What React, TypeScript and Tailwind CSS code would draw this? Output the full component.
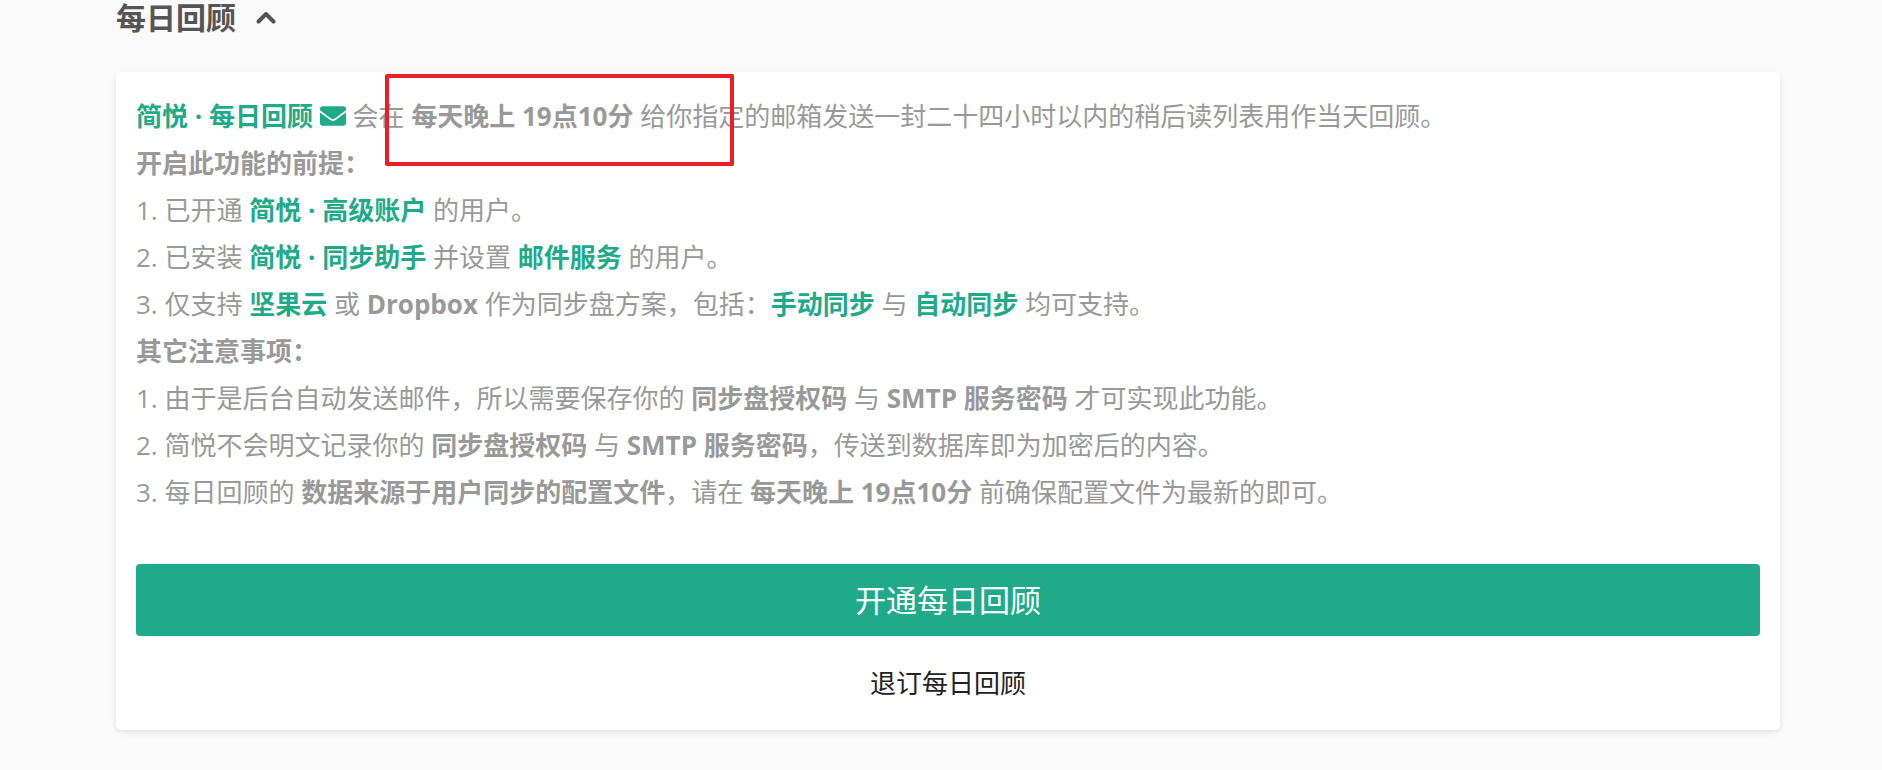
import { FaEnvelope } from 'react-icons/fa';

const fontStack = '"Open Sans", "Noto Sans CJK SC", sans-serif';

const G = ({ children }: { children: React.ReactNode }) => (
    <b className="font-bold text-[#1fab89]">{children}</b>
);

const B = ({ children }: { children: React.ReactNode }) => (
    <b className="font-bold">{children}</b>
);

const App = () => {
    return (
        <div className="relative min-h-[770px] bg-[#fafafa] pl-[116px] pr-[102px]" style={{ fontFamily: fontStack }}>
            <div className="flex h-[72px] items-start text-[30px] leading-[36px] font-bold text-[#555]">
                <span>每日回顾</span>
                <svg viewBox="0 0 20 14" className="ml-[20px] mt-[10px] h-[15px] w-[20px]" fill="none" stroke="currentColor" strokeWidth="4" strokeLinecap="round" strokeLinejoin="round">
                    <polyline points="2.5,11 10,3.5 17.5,11" />
                </svg>
            </div>

            <div className="h-[658px] rounded-[6px] bg-white px-[20px] pt-[21px] shadow-[0_2px_6px_rgba(0,0,0,0.1)]">
                <div className="text-[26px] leading-[47px] text-[#999]">
                    <div>
                        <G>简悦 · 每日回顾</G> <FaEnvelope className="inline h-[26px] w-[26px] align-[-3px] text-[#1fab89]" /> 会在 <B>每天晚上 19点10分</B> 给你指定的邮箱发送一封二十四小时以内的稍后读列表用作当天回顾。
                    </div>
                    <div><B>开启此功能的前提：</B></div>
                    <div>1. 已开通 <G>简悦 · 高级账户</G> 的用户。</div>
                    <div>2. 已安装 <G>简悦 · 同步助手</G> 并设置 <G>邮件服务</G> 的用户。</div>
                    <div>3. 仅支持 <G>坚果云</G> 或 <B>Dropbox</B> 作为同步盘方案，包括：<G>手动同步</G> 与 <G>自动同步</G> 均可支持。</div>
                    <div><B>其它注意事项：</B></div>
                    <div>1. 由于是后台自动发送邮件，所以需要保存你的 <B>同步盘授权码</B> 与 <B>SMTP 服务密码</B> 才可实现此功能。</div>
                    <div>2. 简悦不会明文记录你的 <B>同步盘授权码</B> 与 <B>SMTP 服务密码</B>，传送到数据库即为加密后的内容。</div>
                    <div>3. 每日回顾的 <B>数据来源于用户同步的配置文件</B>，请在 <B>每天晚上 19点10分</B> 前确保配置文件为最新的即可。</div>
                </div>

                <button className="mt-[48px] flex h-[72px] w-full items-center justify-center rounded-[4px] bg-[#1fab89] text-[31px] text-white">
                    开通每日回顾
                </button>
                <div className="mt-[23px] text-center text-[26px] leading-[48px] text-[#222]">退订每日回顾</div>
            </div>

            <div className="absolute left-[385px] top-[74px] h-[92px] w-[349px] rounded-[2px] border-[4px] border-[#ee1c25]" />
        </div>
    );
};

export default App;
